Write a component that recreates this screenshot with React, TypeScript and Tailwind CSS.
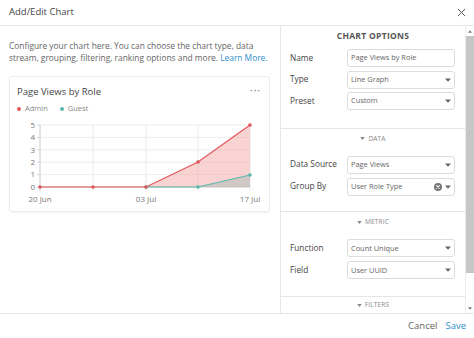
import React from 'react'

const font = "font-['Open_Sans','Liberation_Sans',sans-serif]"

function Caret() {
  return (
    <svg width="6" height="4" viewBox="0 0 6 4" className="shrink-0">
      <path d="M0 0.5 L6 0.5 L3 3.8 Z" fill="#666" />
    </svg>
  )
}

function Field({ label, value, select, clear }: { label: string; value: string; select?: boolean; clear?: boolean }) {
  return (
    <div className="flex items-center h-[18px]">
      <span className="w-[57px] shrink-0 text-[8.3px] text-[#444]">{label}</span>
      <div className="flex-1 h-[18px] mr-[10px] rounded-[3px] border border-[#dcdcdc] bg-white flex items-center pl-[3px] pr-[3px] gap-[2px]">
        <span className="flex-1 text-[7.4px] text-[#666] truncate">{value}</span>
        {clear && (
          <svg width="8" height="8" viewBox="0 0 10 10" className="mr-[1px]">
            <circle cx="5" cy="5" r="5" fill="#777" />
            <path d="M3 3 L7 7 M7 3 L3 7" stroke="#fff" strokeWidth="1.4" />
          </svg>
        )}
        {select && <Caret />}
      </div>
    </div>
  )
}

function SectionHead({ title, h = 'h-[20px]' }: { title: string; h?: string }) {
  return (
    <div className={`flex items-center justify-center gap-[3px] ${h} text-[6.5px] tracking-wide text-[#888]`}>
      <svg width="5" height="3" viewBox="0 0 6 4">
        <path d="M0 0 L6 0 L3 4 Z" fill="#888" />
      </svg>
      {title}
    </div>
  )
}

function Chart() {
  const xs = [39, 92, 145, 197, 249]
  const y0 = 187
  const step = 12.4
  const ys = [0, 1, 2, 3, 4, 5].map((v) => y0 - v * step)
  const ox = 9
  const oy = 77
  const X = (v: number) => v - ox
  const Y = (v: number) => v - oy
  const admin = [[39, 187], [92, 187], [145, 187], [197, 162], [249, 125]]
  const guest = [[145, 187], [197, 187], [249, 175]]
  const line = (pts: number[][]) => pts.map((p, i) => `${i ? 'L' : 'M'}${X(p[0])} ${Y(p[1])}`).join(' ')
  const area = (pts: number[][]) =>
    `${line(pts)} L${X(pts[pts.length - 1][0])} ${Y(y0)} L${X(pts[0][0])} ${Y(y0)} Z`
  return (
    <svg width="261" height="136" viewBox="0 0 261 136" className="absolute left-0 top-0">
      {ys.map((y, i) => (
        <g key={i}>
          <line x1={X(39)} x2={X(249)} y1={Y(y)} y2={Y(y)} stroke="#e8e8e8" strokeWidth="0.8" />
          <line x1={X(36)} x2={X(39)} y1={Y(y)} y2={Y(y)} stroke="#ccc" strokeWidth="0.8" />
          <text x={X(34)} y={Y(y) + 2.8} fontSize="8" fill="#777" textAnchor="end" fontFamily="Open Sans">{i}</text>
        </g>
      ))}
      {xs.map((x, i) => (
        <line key={i} x1={X(x)} x2={X(x)} y1={Y(125)} y2={Y(191)} stroke="#e4e4e4" strokeWidth="0.8" />
      ))}
      <line x1={X(39)} x2={X(39)} y1={Y(125)} y2={Y(191)} stroke="#ccc" strokeWidth="0.8" />
      <line x1={X(39)} x2={X(249)} y1={Y(187)} y2={Y(187)} stroke="#ccc" strokeWidth="0.8" />
      <path d={area(admin)} fill="#f3a6a6" fillOpacity="0.5" />
      <path d={area(guest)} fill="#9fbab6" fillOpacity="0.45" />
      <path d={line(guest)} fill="none" stroke="#5ab8ae" strokeWidth="1.2" />
      <path d={line(admin)} fill="none" stroke="#e0575a" strokeWidth="1.2" />
      {guest.map((p, i) => (
        <circle key={i} cx={X(p[0])} cy={Y(p[1])} r="1.8" fill="#5ab8ae" />
      ))}
      {admin.map((p, i) => (
        <circle key={i} cx={X(p[0])} cy={Y(p[1])} r="1.8" fill="#e0575a" />
      ))}
      <text x={X(39)} y={Y(202)} fontSize="8" fill="#777" textAnchor="middle" fontFamily="Open Sans">20 Jun</text>
      <text x={X(145)} y={Y(202)} fontSize="8" fill="#777" textAnchor="middle" fontFamily="Open Sans">03 Jul</text>
      <text x={X(249)} y={Y(202)} fontSize="8" fill="#777" textAnchor="middle" fontFamily="Open Sans">17 Jul</text>
    </svg>
  )
}

export default function App() {
  return (
    <div className={`w-[474px] h-[338px] bg-white flex flex-col overflow-hidden ${font}`}>
      <div className="h-[26px] shrink-0 border-b border-[#e6e6e6] flex items-center justify-between pl-[9px] pr-[8px]">
        <span className="text-[9.5px] text-[#444]">Add/Edit Chart</span>
        <svg width="9" height="9" viewBox="0 0 10 10">
          <path d="M1 1 L9 9 M9 1 L1 9" stroke="#555" strokeWidth="1.1" />
        </svg>
      </div>

      <div className="flex-1 flex min-h-0">
        <div className="w-[280px] shrink-0 pl-[9px] pr-[4px] pt-[14px]">
          <p className="text-[8.4px] leading-[12px] text-[#666] whitespace-nowrap">
            Configure your chart here. You can choose the chart type, data
            <br />
            stream, grouping, filtering, ranking options and more.{' '}
            <span className="text-[#2f8fce]">Learn More.</span>
          </p>
          <div className="relative mt-[12px] w-[261px] h-[136px] rounded-[3px] border border-[#ececec] shadow-[0_1px_2px_rgba(0,0,0,0.05)]">
            <Chart />
            <div className="relative flex items-center justify-between pl-[7px] pr-[8px] pt-[8px]">
              <span className="text-[9.5px] text-[#444]">Page Views by Role</span>
              <span className="text-[10px] text-[#666] tracking-[1px] -mt-[4px]">···</span>
            </div>
            <div className="relative flex items-center gap-[4px] pl-[7px] mt-[4px] text-[7.5px] text-[#888]">
              <span className="w-[4px] h-[4px] rounded-full bg-[#e0575a]" />
              <span className="mr-[8px]">Admin</span>
              <span className="w-[4px] h-[4px] rounded-full bg-[#5ab8ae]" />
              <span>Guest</span>
            </div>
          </div>
        </div>

        <div className="flex-1 flex border-l border-[#e6e6e6] min-h-0">
          <div className="flex-1 border-r border-[#ececec] flex flex-col">
            <div className="pt-[3px] h-[102px]">
              <div className="text-center h-[13px] leading-[13px] text-[8.5px] font-bold tracking-[0.3px] text-[#555] mb-[7px]">CHART OPTIONS</div>
              <div className="pl-[9px] flex flex-col gap-[3.5px]">
                <Field label="Name" value="Page Views by Role" />
                <Field label="Type" value="Line Graph" select />
                <Field label="Preset" value="Custom" select />
              </div>
            </div>
            <div className="border-t border-[#e6e6e6] h-[84px]">
              <SectionHead title="DATA" />
              <div className="pl-[9px] mt-[7px] flex flex-col gap-[4px]">
                <Field label="Data Source" value="Page Views" select />
                <Field label="Group By" value="User Role Type" select clear />
              </div>
            </div>
            <div className="border-t border-[#e6e6e6] h-[85px]">
              <SectionHead title="METRIC" />
              <div className="pl-[9px] mt-[7px] flex flex-col gap-[4px]">
                <Field label="Function" value="Count Unique" select />
                <Field label="Field" value="User UUID" select />
              </div>
            </div>
            <div className="border-t border-[#e6e6e6]">
              <SectionHead title="FILTERS" h="h-[16px]" />
            </div>
          </div>
          <div className="w-[8px] shrink-0 flex flex-col items-center">
            <div className="h-[10px] flex items-center">
              <svg width="4" height="3" viewBox="0 0 6 4"><path d="M0 4 L6 4 L3 0 Z" fill="#777" /></svg>
            </div>
            <div className="w-full h-[237px] bg-[#c6c6c6]" />
            <div className="flex-1" />
            <div className="h-[10px] flex items-center">
              <svg width="4" height="3" viewBox="0 0 6 4"><path d="M0 0 L6 0 L3 4 Z" fill="#777" /></svg>
            </div>
          </div>
        </div>
      </div>

      <div className="h-[25px] shrink-0 border-t border-[#e6e6e6] flex items-center justify-end gap-[8px] pr-[8px]">
        <span className="text-[9.5px] text-[#666]">Cancel</span>
        <span className="text-[9.5px] text-[#2f8fce]">Save</span>
      </div>
    </div>
  )
}
